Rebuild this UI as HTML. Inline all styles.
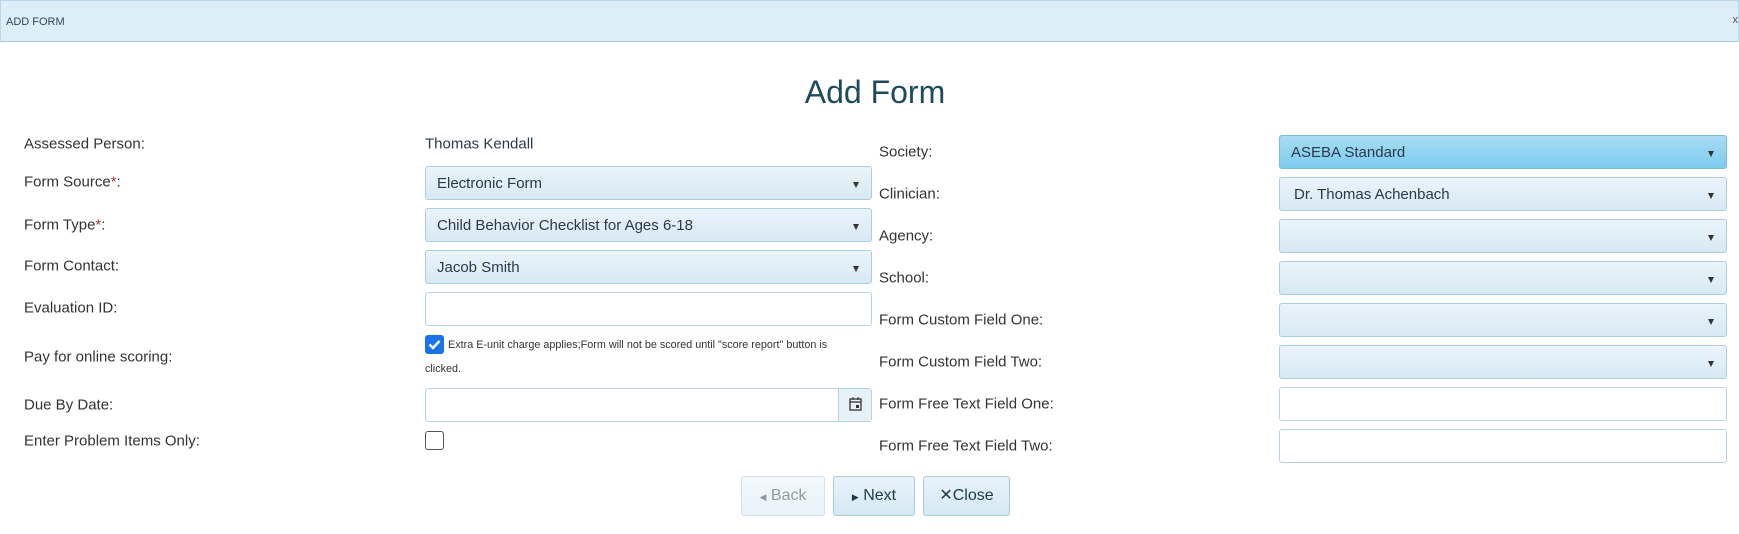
<!DOCTYPE html>
<html><head><meta charset="utf-8"><style>
*{box-sizing:border-box;margin:0;padding:0}
body{width:1739px;height:534px;background:#fff;font-family:"Liberation Sans",sans-serif;color:#333;position:relative;overflow:hidden}
.hdr{position:absolute;left:0;top:0;width:1739px;height:42px;background:#ddeef8;border:1px solid #b9d7e8;border-bottom:1px solid #a9c9dc}
.hdr span{position:absolute;left:5px;top:15px;font-size:11px;color:#2a4a5a}
.hdr b{position:absolute;right:0;top:13px;font-size:11px;font-weight:normal;color:#555}
h1{position:absolute;left:0;width:1750px;text-align:center;top:74px;font-size:32px;font-weight:normal;color:#1d4b5c}
.l{position:absolute;font-size:15px;color:#333;transform:translateY(-50%);white-space:nowrap}
.l i{color:#a33;font-style:normal}
.sel{position:absolute;height:34px;border:1px solid #a9cfe3;border-radius:3px;background:linear-gradient(#eaf4fa,#d8e9f3);font-size:15px;padding:8px 0 0 11px;color:#2a3a48}
.sel:after{content:"";position:absolute;right:12px;top:15px;border-left:3.5px solid transparent;border-right:3.5px solid transparent;border-top:6px solid #333}
.sel.blue{background:linear-gradient(#a9ddf4,#7ccbef);border-color:#7ab9dc}
.inp{position:absolute;height:34px;border:1px solid #b7d3e2;border-radius:3px;background:#fff}
.btn{position:absolute;top:476px;height:40px;border:1px solid #a9c9dc;border-radius:3px;background:linear-gradient(#e8f3fa,#d6e8f3);font-size:16px;color:#1d3a4a;text-align:center;line-height:38px}
</style></head><body>
<div class="hdr"><span>ADD FORM</span><b>x</b></div>
<h1>Add Form</h1>

<div class="l" style="left:24px;top:144px">Assessed Person:</div>
<div class="l" style="left:425px;top:144px;color:#2a3a48">Thomas Kendall</div>
<div class="l" style="left:24px;top:182px">Form Source<i>*</i>:</div>
<div class="sel" style="left:425px;top:166px;width:447px">Electronic Form</div>
<div class="l" style="left:24px;top:225px">Form Type<i>*</i>:</div>
<div class="sel" style="left:425px;top:208px;width:447px">Child Behavior Checklist for Ages 6-18</div>
<div class="l" style="left:24px;top:266px">Form Contact:</div>
<div class="sel" style="left:425px;top:250px;width:447px">Jacob Smith</div>
<div class="l" style="left:24px;top:308px">Evaluation ID:</div>
<div class="inp" style="left:425px;top:292px;width:447px"></div>
<div class="l" style="left:24px;top:357px">Pay for online scoring:</div>
<div style="position:absolute;left:425px;top:335px;width:19px;height:19px;border-radius:3px;background:#1a73e8"><svg width="19" height="19"><path d="M4.5 9.5l3.5 3.5 6.5-7" stroke="#fff" stroke-width="2.4" fill="none"/></svg></div>
<div style="position:absolute;left:448px;top:339px;font-size:10.8px;color:#333">Extra E-unit charge applies;Form will not be scored until "score report" button is</div>
<div style="position:absolute;left:425px;top:363px;font-size:10.8px;color:#333">clicked.</div>
<div class="l" style="left:24px;top:405px">Due By Date:</div>
<div class="inp" style="left:425px;top:388px;width:447px"><div style="position:absolute;right:0;top:0;width:33px;height:32px;border-left:1px solid #b7d3e2;background:#e6f1f8"><svg width="33" height="32"><rect x="11" y="10" width="11" height="11" fill="none" stroke="#333" stroke-width="1.3"/><line x1="11" y1="13" x2="22" y2="13" stroke="#333" stroke-width="1.3"/><line x1="14" y1="8" x2="14" y2="11" stroke="#333"/><line x1="19" y1="8" x2="19" y2="11" stroke="#333"/><rect x="17" y="16" width="3" height="3" fill="#333"/></svg></div></div>
<div class="l" style="left:24px;top:441px">Enter Problem Items Only:</div>
<div style="position:absolute;left:425px;top:431px;width:19px;height:19px;border:1.5px solid #555;border-radius:3px"></div>

<div class="l" style="left:879px;top:152px">Society:</div>
<div class="sel blue" style="left:1279px;top:135px;width:448px">ASEBA Standard</div>
<div class="l" style="left:879px;top:194px">Clinician:</div>
<div class="sel" style="left:1279px;top:177px;width:448px;padding-left:14px">Dr. Thomas Achenbach</div>
<div class="l" style="left:879px;top:236px">Agency:</div>
<div class="sel" style="left:1279px;top:219px;width:448px"></div>
<div class="l" style="left:879px;top:278px">School:</div>
<div class="sel" style="left:1279px;top:261px;width:448px"></div>
<div class="l" style="left:879px;top:320px">Form Custom Field One:</div>
<div class="sel" style="left:1279px;top:303px;width:448px"></div>
<div class="l" style="left:879px;top:362px">Form Custom Field Two:</div>
<div class="sel" style="left:1279px;top:345px;width:448px"></div>
<div class="l" style="left:879px;top:404px">Form Free Text Field One:</div>
<div class="inp" style="left:1279px;top:387px;width:448px"></div>
<div class="l" style="left:879px;top:446px">Form Free Text Field Two:</div>
<div class="inp" style="left:1279px;top:429px;width:448px"></div>

<div class="btn" style="left:741px;width:84px;opacity:.5"><span style="font-size:9px">◀</span> Back</div>
<div class="btn" style="left:833px;width:82px"><span style="font-size:9px">▶</span> Next</div>
<div class="btn" style="left:923px;width:87px">✕Close</div>
</body></html>
